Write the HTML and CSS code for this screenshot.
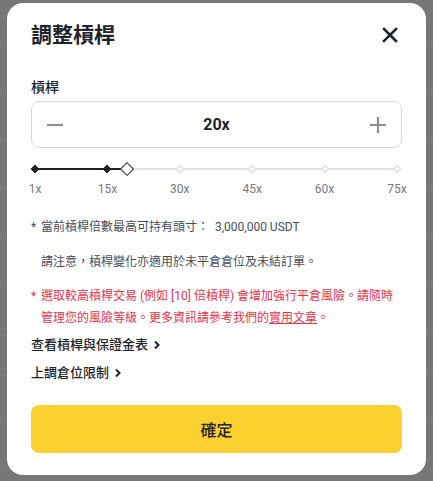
FILE: index.html
```html
<!DOCTYPE html>
<html lang="zh-Hant">
<head>
  <meta charset="UTF-8" />
  <meta name="viewport" content="width=device-width, initial-scale=1" />
  <title>調整槓桿</title>
  <link rel="stylesheet" href="styles.css">
</head>
<body>
  <div class="backdrop">
    <div class="modal">
      <header class="modal-head">
        <h1>調整槓桿</h1>
        <button class="close" aria-label="關閉">
          <svg width="16" height="16" viewBox="0 0 16 16"><path d="M2 2 L14 14 M14 2 L2 14" stroke="#1e2329" stroke-width="2.6" stroke-linecap="square"/></svg>
        </button>
      </header>

      <div class="label">槓桿</div>
      <div class="stepper">
        <button class="step" aria-label="減少">
          <svg width="18" height="18" viewBox="0 0 18 18"><path d="M1 9 H17" stroke="#8a8f98" stroke-width="2.2"/></svg>
        </button>
        <div class="value">20x</div>
        <button class="step" aria-label="增加">
          <svg width="18" height="18" viewBox="0 0 18 18"><path d="M1 9 H17 M9 1 V17" stroke="#8a8f98" stroke-width="2.2"/></svg>
        </button>
      </div>

      <div class="slider">
        <div class="track">
          <div class="fill" style="width: 25.5%"></div>
          <div class="marks">
            <span class="mark on"><i></i></span>
            <span class="mark on"><i></i></span>
            <span class="mark"><i></i></span>
            <span class="mark"><i></i></span>
            <span class="mark"><i></i></span>
            <span class="mark"><i></i></span>
          </div>
          <span class="thumb" style="left: 25.5%"></span>
        </div>
        <div class="ticks">
          <span>1x</span><span>15x</span><span>30x</span><span>45x</span><span>60x</span><span>75x</span>
        </div>
      </div>

      <p class="note"><span class="star">*</span>當前槓桿倍數最高可持有頭寸：&nbsp; 3,000,000 USDT</p>
      <p class="note"><span class="star"></span>請注意，槓桿變化亦適用於未平倉倉位及未結訂單。</p>
      <p class="note warn"><span class="star">*</span><span>選取較高槓桿交易 (例如 [10] 倍槓桿) 會增加強行平倉風險。請隨時管理您的風險等級。更多資訊請參考我們的<a href="#">實用文章</a>。</span></p>

      <a class="link first" href="#">查看槓桿與保證金表 <svg width="8" height="10" viewBox="0 0 8 10"><path d="M2 1.5 L5.5 5 L2 8.5" fill="none" stroke="#1e2329" stroke-width="2"/></svg></a>
      <a class="link" href="#">上調倉位限制 <svg width="8" height="10" viewBox="0 0 8 10"><path d="M2 1.5 L5.5 5 L2 8.5" fill="none" stroke="#1e2329" stroke-width="2"/></svg></a>

      <button class="confirm">確定</button>
    </div>
  </div>
</body>
</html>
```

FILE: styles.css
```css
* { box-sizing: border-box; }
body { margin: 0; font-family: Roboto, "Noto Sans CJK TC", sans-serif; color: #1e2329; }
.backdrop {
  width: 433px; height: 481px; padding: 3px 7px 6px 7px;
  background-color: #777777;
  background-image: repeating-linear-gradient(180deg, transparent 0, transparent 46px, #7e7e7e 46px, #7e7e7e 47px);
}
.modal { background: #ffffff; border-radius: 16px; height: 472px; padding: 17px 24px 0 24px; display: flex; flex-direction: column; }
.modal-head { display: flex; justify-content: space-between; align-items: center; height: 30px; }
.modal-head h1 { margin: 0; font-size: 21px; font-weight: 700; line-height: 30px; }
.close { border: none; background: none; padding: 0; width: 16px; height: 16px; margin-right: 4px; }
.close svg { display: block; }

.label { margin-top: 27px; font-size: 14px; font-weight: 500; line-height: 20px; }
.stepper {
  margin-top: 4px; height: 47px; border: 1px solid #d5d8dc; border-radius: 8px;
  display: flex; align-items: center; justify-content: space-between; padding: 0 14px;
}
.step { border: none; background: none; padding: 0; width: 18px; height: 18px; }
.step svg { display: block; }
.value { font-size: 16px; font-weight: 700; }

.slider { margin: 16px 5px 0 4px; }
.track { position: relative; height: 10px; }
.track::before { content: ""; position: absolute; left: 0; right: 0; top: 4px; height: 2px; background: #e0e3e7; }
.fill { position: absolute; left: 0; top: 4px; height: 2px; background: #1e2329; }
.marks { position: relative; display: flex; justify-content: space-between; height: 10px; align-items: center; }
.mark { width: 0; display: flex; justify-content: center; }
.mark i { flex: none; width: 6px; height: 6px; transform: rotate(45deg); background: #fff; border: 1px solid #d5d8dc; }
.mark.on i { background: #1e2329; border-color: #1e2329; }
.thumb {
  position: absolute; top: 0; width: 10px; height: 10px; margin-left: -5px;
  transform: rotate(45deg); background: #fff; border: 1.5px solid #1e2329;
}
.ticks { display: flex; justify-content: space-between; margin-top: 7px; font-size: 12px; color: #707a8a; line-height: 16px; }
.ticks span { width: 0; display: flex; justify-content: center; white-space: nowrap; }

.note { display: flex; margin: 0; font-size: 12px; line-height: 22px; color: #474d57; }
.note:nth-of-type(1) { margin-top: 19px; }
.note:nth-of-type(2) { margin-top: 13px; }
.note.warn { margin-top: 12px; color: #e8334c; }
.star { flex: none; width: 10px; }
.warn a { color: inherit; }

.link { display: flex; align-items: center; gap: 5px; font-size: 13px; font-weight: 500; color: #1e2329; text-decoration: none; line-height: 16px; }
.link.first { margin-top: 8px; }
.link + .link { margin-top: 12px; }
.link svg { display: block; }

.confirm {
  margin-top: 24px; height: 48px; width: 100%; border: none; border-radius: 8px;
  background: #fcd02e; color: #1e2329; font-family: inherit; font-size: 16px; font-weight: 500;
}
```
